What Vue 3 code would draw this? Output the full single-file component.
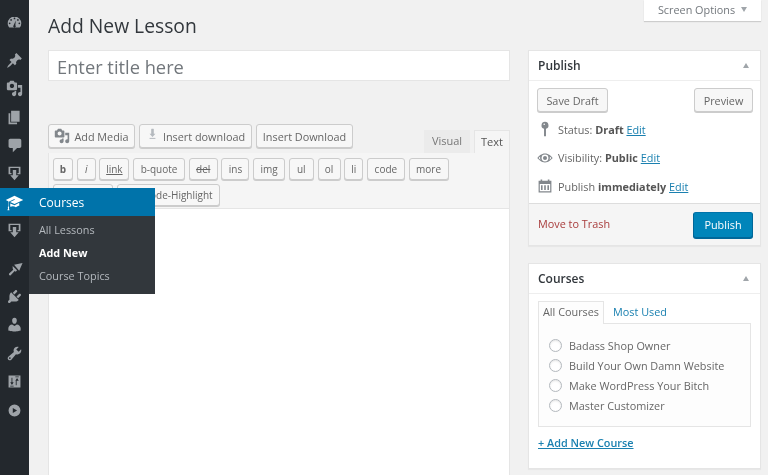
<script setup>
const tags = [
  { label: 'b', w: 20, cls: 'bold' },
  { label: 'i', w: 19, cls: 'ital' },
  { label: 'link', w: 30, cls: 'under' },
  { label: 'b-quote', w: 52 },
  { label: 'del', w: 29, cls: 'strike' },
  { label: 'ins', w: 28 },
  { label: 'img', w: 32 },
  { label: 'ul', w: 25 },
  { label: 'ol', w: 23 },
  { label: 'li', w: 19 },
  { label: 'code', w: 38 },
  { label: 'more', w: 40 }
]
const courses = ['Badass Shop Owner', 'Build Your Own Damn Website', 'Make WordPress Your Bitch', 'Master Customizer']
const mediaPath = 'M13 11V4c0-.55-.45-1-1-1h-1.670L9 1H5L3.670 3H2c-.55 0-1 .45-1 1v7c0 .55.45 1 1 1h10c.55 0 1-.45 1-1zM7 4.500c1.380 0 2.500 1.120 2.500 2.500S8.380 9.500 7 9.500 4.500 8.380 4.500 7 5.620 4.500 7 4.500zM14 6h5v10.500c0 1.380-1.120 2.500-2.500 2.500S14 17.880 14 16.500s1.120-2.500 2.500-2.500c.17 0 .34.020.5.050V9h-3V6zm-4 8.050V13h2v3.500c0 1.380-1.120 2.500-2.500 2.500S7 17.880 7 16.500 8.120 14 9.500 14c.17 0 .34.020.5.050z'
const dlFrame = 'M3 2h14v9h-3.500V9.500H15v-6H5v6h1.500V11H3z'
const dlArrow = 'M8 6h4v6h3l-5 6-5-6h3z'
</script>

<template>
  <div class="page">
    <aside class="side">
      <div class="item first">
        <svg viewBox="0 0 20 20" class="ic"><path fill-rule="evenodd" d="M10 3a8 8 0 0 0-8 8c0 1.900.7 3.600 1.800 5h12.400a8 8 0 0 0 1.800-5 8 8 0 0 0-8-8zM10 4.200a1 1 0 1 1 0 2 1 1 0 0 1 0-2zM6 6a1 1 0 1 1 0 2 1 1 0 0 1 0-2zm8 0a1 1 0 1 1 0 2 1 1 0 0 1 0-2zM4.300 10a1 1 0 1 1 0 2 1 1 0 0 1 0-2zm11.400 0a1 1 0 1 1 0 2 1 1 0 0 1 0-2zM11.500 7.500l-.5 5.700a1.500 1.500 0 1 1-2 0z"/></svg>
      </div>
      <div class="item sep">
        <svg viewBox="0 0 20 20" class="ic"><path d="M10.440 3.020l1.820-1.820 6.360 6.350-1.830 1.820c-1.050-.68-2.480-.57-3.410.36l-.75.75c-.92.93-1.040 2.350-.35 3.400l-1.830 1.820-2.410-2.410-2.800 2.790c-.42.420-3.380 2.710-3.800 2.290s1.860-3.390 2.280-3.810l2.790-2.790L4.100 9.360l1.830-1.820c1.050.69 2.480.57 3.400-.36l.75-.75c.93-.92 1.050-2.350.36-3.410z"/></svg>
      </div>
      <div class="item">
        <svg viewBox="0 0 20 20" class="ic"><path :d="mediaPath"/></svg>
      </div>
      <div class="item">
        <svg viewBox="0 0 20 20" class="ic"><path d="M6 15V2h10v13H6zm-1 1h8v2H3V5h2v11z"/></svg>
      </div>
      <div class="item">
        <svg viewBox="0 0 20 20" class="ic"><path d="M5 2h11c1.100 0 2 .9 2 2v7c0 1.100-.9 2-2 2h-3l-5 5v-5H5c-1.100 0-2-.9-2-2V4c0-1.100.9-2 2-2z"/></svg>
      </div>
      <div class="item">
        <svg viewBox="0 0 20 20" class="ic"><path fill-rule="evenodd" :d="dlFrame"/><path :d="dlArrow"/></svg>
      </div>
      <div class="item active">
        <div class="fly">
          <div class="fly-head">
            <span class="fly-icon">
              <svg viewBox="0 0 20 20" class="ic white"><path d="M10 3L0.800 7.300l2.700 1.300v5.500c-.6.300-.6 1.200-.2 2l-.8 2h2.200l-.6-2c.4-.7.400-1.600-.2-2V9.200L10 6.300l.3.700-5 2.400L10 11.600l9.200-4.300z"/><path d="M5.500 11v3.500c2.500-1 4-.8 6 .5 2-1.300 2.800-1.500 3.500-1.500v-3.200L10 13z"/></svg>
            </span>
            <span class="fly-title">Courses</span>
          </div>
          <ul class="sub">
            <li>All Lessons</li>
            <li class="cur">Add New</li>
            <li>Course Topics</li>
          </ul>
        </div>
      </div>
      <div class="item">
        <svg viewBox="0 0 20 20" class="ic"><path fill-rule="evenodd" :d="dlFrame"/><path :d="dlArrow"/></svg>
      </div>
      <div class="item sep">
        <svg viewBox="0 0 20 20" class="ic"><path d="M9.500 5.500L19.500 3.500 15.500 12.500z"/><path d="M7.800 7l5.200 5.200-1.500 1.500-1.300-.7-4.700 4.800c-1 1-2.800-.6-1.800-1.800l4.800-4.500-.6-1.400z"/></svg>
      </div>
      <div class="item">
        <svg viewBox="0 0 20 20" class="ic"><path d="M13.110 4.360L9.870 7.600 8 5.730l3.240-3.240c.35-.34 1.050-.2 1.560.32.52.51.66 1.210.31 1.550zm-8 1.770l.91-1.120 9.010 9.010-1.190.84c-.71.71-2.630 1.160-3.820 1.160H6.140L4.900 17.260c-.59.59-1.540.59-2.120 0-.59-.58-.59-1.530 0-2.120l1.240-1.240v-3.880c0-1.130.4-3.190 1.090-3.890zm7.260 3.970l3.240-3.240c.34-.35 1.040-.21 1.550.31.52.51.66 1.210.31 1.550l-3.240 3.250z"/></svg>
      </div>
      <div class="item">
        <svg viewBox="0 0 20 20" class="ic"><path d="M10 9.250c-2.270 0-2.730-3.440-2.730-3.440C7 4.020 7.820 2 9.970 2c2.160 0 2.980 2.020 2.710 3.810 0 0-.41 3.440-2.680 3.440zm0 2.570L12.720 10c2.390 0 4.520 2.330 4.520 4.530v2.490s-3.650 1.130-7.240 1.130c-3.650 0-7.240-1.130-7.240-1.130v-2.490c0-2.250 1.940-4.530 4.430-4.530z"/></svg>
      </div>
      <div class="item">
        <svg viewBox="0 0 20 20" class="ic"><path d="M16.680 9.770c-1.340 1.340-3.300 1.670-4.950.99l-5.410 6.520c-.99.99-2.590.99-3.580 0s-.99-2.590 0-3.570l6.520-5.420c-.68-1.650-.35-3.610.99-4.950 1.280-1.280 3.120-1.620 4.720-1.060l-2.890 2.890 2.820 2.820 2.860-2.870c.53 1.580.18 3.400-1.080 4.650zM3.810 16.210c.4.390 1.040.39 1.430 0 .4-.4.4-1.040 0-1.430-.39-.4-1.030-.4-1.430 0-.39.39-.39 1.030 0 1.430z"/></svg>
      </div>
      <div class="item">
        <svg viewBox="0 0 20 20" class="ic"><path fill-rule="evenodd" d="M3 3h14v14H3zM6.500 5.500V11H5l2 3 2-3H7.500V5.500zm6 9V9H15l-2-3-2 3h.5v5.500zM5 15v1h4v-1zM11 4v1h4V4z"/></svg>
      </div>
      <div class="item">
        <svg viewBox="0 0 20 20" class="ic"><path fill-rule="evenodd" d="M10 3a7 7 0 1 0 0 14 7 7 0 0 0 0-14zM8 7l5 3-5 3z"/></svg>
      </div>
    </aside>

    <main class="main">
      <div class="col-left">
        <h1 class="title">Add New Lesson</h1>
        <div class="title-input">Enter title here</div>

        <div class="edtools">
          <div class="media-btns">
            <button class="btn btn-am">
              <svg viewBox="0 0 20 20" class="btn-ic"><path :d="mediaPath"/></svg>
              Add Media
            </button>
            <button class="btn btn-dl">
              <svg viewBox="0 0 20 20" class="btn-ic faint"><path d="M8 2.500c0-1 4-1 4 0v7h2.500L10 14.500 5.500 9.500H8z"/><path d="M5.500 16h9v1.500h-9z"/></svg>
              Insert download
            </button>
            <button class="btn btn-id">Insert Download</button>
          </div>
          <div class="tabs">
            <span class="tab">Visual</span>
            <span class="tab on">Text</span>
          </div>
        </div>

        <div class="editor">
          <div class="quicktags">
            <span v-for="t in tags" :key="t.label" class="qt" :class="t.cls" :style="{ width: t.w + 'px' }">{{ t.label }}</span>
            <span class="qt qt-blank"></span>
            <span class="qt qt-code">Code-Highlight</span>
          </div>
          <div class="textarea"></div>
        </div>
      </div>

      <div class="col-right">
        <button class="screen-opts">Screen Options <span class="tri-down"></span></button>

        <section class="box publish">
          <header class="box-head"><h2>Publish</h2><span class="tri-up"></span></header>
          <div class="pub-body">
            <div class="pub-btns">
              <button class="btn">Save Draft</button>
              <button class="btn">Preview</button>
            </div>
            <div class="pub-row">
              <svg viewBox="0 0 20 20" class="pub-ic"><path fill-rule="evenodd" d="M10 1a4.500 4.500 0 0 0-1.200 8.800V19h2.400V9.800A4.500 4.500 0 0 0 10 1zM9 3a1 1 0 1 1 0 2 1 1 0 0 1 0-2z"/></svg>
              <span>Status: <b>Draft</b> <a>Edit</a></span>
            </div>
            <div class="pub-row">
              <svg viewBox="0 0 20 20" class="pub-ic"><path fill-rule="evenodd" d="M10 4.500c-4.500 0-8 3.500-9.500 5.500 1.500 2 5 5.500 9.500 5.500s8-3.500 9.500-5.500c-1.500-2-5-5.500-9.500-5.500zm0 1.200a4.300 4.300 0 1 1 0 8.600 4.300 4.300 0 0 1 0-8.600zM4 8c-.8.600-1.500 1.300-2 2 .7.900 1.500 1.700 2.500 2.300A6 6 0 0 1 4 8zm12 0a6 6 0 0 1-.5 4.300c1-.6 1.800-1.400 2.500-2.300-.5-.7-1.200-1.400-2-2z"/><path d="M10 7.500a2.500 2.500 0 1 0 0 5 2.500 2.500 0 0 0 0-5z"/></svg>
              <span>Visibility: <b>Public</b> <a>Edit</a></span>
            </div>
            <div class="pub-row">
              <svg viewBox="0 0 20 20" class="pub-ic"><path fill-rule="evenodd" d="M2 3.500h2.500V2h2v1.500h7V2h2v1.500H18V18H2zM3.500 7.500V16.500h13V7.500zM5 9h2v6H5zm4 0h2v6H9zm4 0h2v6h-2z"/></svg>
              <span>Publish <b>immediately</b> <a>Edit</a></span>
            </div>
          </div>
          <footer class="pub-foot">
            <a class="trash">Move to Trash</a>
            <button class="btn primary">Publish</button>
          </footer>
        </section>

        <section class="box courses">
          <header class="box-head"><h2>Courses</h2><span class="tri-up"></span></header>
          <div class="course-body">
            <div class="course-tabs">
              <span class="ctab on">All Courses</span>
              <a class="ctab">Most Used</a>
            </div>
            <div class="course-panel">
              <label v-for="c in courses" :key="c" class="course"><span class="radio"></span>{{ c }}</label>
            </div>
            <a class="add-new">+ Add New Course</a>
          </div>
        </section>
      </div>
    </main>
  </div>
</template>

<style>
html, body { margin: 0; padding: 0; background: #f1f1f1; }
</style>

<style scoped>
* { box-sizing: border-box; }
.page {
  display: flex;
  width: 768px;
  height: 475px;
  overflow: hidden;
  background: #f1f1f1;
  font-family: "Open Sans", sans-serif;
  font-size: 10.85px;
  color: #666;
  filter: blur(0.35px);
}
.side {
  flex: none;
  width: 29px;
  height: 475px;
  background: #23282d;
  padding-top: 8.800px;
}
.item {
  height: 28.4px;
  display: flex;
  align-items: center;
  justify-content: center;
  padding-right: 1px;
}
.item.sep { margin-top: 9px; }
.ic { width: 17px; height: 17px; fill: #9ea3a8; display: block; }
.ic.white { fill: #fff; width: 19px; height: 19px; }
.item.active { position: relative; z-index: 5; }
.fly {
  position: absolute;
  left: 0;
  top: 0;
  width: 155px;
}
.fly-head {
  display: flex;
  align-items: center;
  height: 28px;
  background: #0073aa;
  color: #fff;
  font-size: 12px;
}
.fly-icon { width: 29px; display: flex; justify-content: center; margin-right: 10px; padding-right: 1px; }
.sub {
  list-style: none;
  margin: 0 0 0 29px;
  padding: 2px 0 0 0;
  height: 78px;
  background: #32373c;
  color: #b4b9be;
  font-size: 10.85px;
}
.sub li { height: 23px; line-height: 23px; padding-left: 10px; }
.sub li.cur { color: #fff; font-weight: 700; }

.main {
  flex: 1;
  display: flex;
  padding-left: 19px;
  min-width: 0;
}
.col-left { width: 462px; flex: none; }
.title {
  margin: 0;
  height: 50px;
  padding-top: 9px;
  font-size: 19.3px;
  line-height: 33px;
  font-weight: 400;
  color: #32373c;
}
.title-input {
  height: 31px;
  background: #fff;
  border: 1px solid #e5e5e5;
  padding: 1px 0 0 8px;
  font-size: 18.3px;
  line-height: 29px;
  color: #72777c;
}
.edtools {
  display: flex;
  justify-content: space-between;
  align-items: flex-end;
  margin-top: 43px;
  height: 29px;
}
.media-btns { display: flex; gap: 4px; align-self: flex-start; }
.btn {
  display: inline-flex;
  align-items: center;
  justify-content: center;
  height: 24px;
  padding: 0;
  background: #f7f7f7;
  border: 1px solid #ccc;
  border-radius: 3px;
  box-shadow: 0 1px 0 #ccc;
  font: inherit;
  color: #666;
}
.btn-ic { width: 16px; height: 16px; fill: #82878c; margin-right: 4px; flex: none; }
.btn-ic.faint { fill: #b4b9be; width: 13px; height: 16px; margin-right: 4px; margin-top: -4px; }
.btn-am { width: 87px; }
.btn-dl { width: 113px; }
.btn-id { width: 97px; }
.tabs { display: flex; gap: 4px; }
.tab {
  height: 23px;
  width: 46px;
  line-height: 22px;
  text-align: center;
  background: #ebebeb;
  color: #777;
  font-size: 11px;
}
.tab.on {
  width: 36px;
  background: #f5f5f5;
  border: 1px solid #e5e5e5;
  border-bottom: 0;
  color: #555;
}
.editor { border-left: 1px solid #e5e5e5; border-right: 1px solid #e5e5e5; }
.quicktags {
  display: flex;
  flex-wrap: wrap;
  gap: 4px 3.7px;
  align-content: flex-start;
  height: 56px;
  padding: 5px 4px;
  background: #f5f5f5;
  border-bottom: 1px solid #e5e5e5;
}
.qt {
  display: inline-flex;
  align-items: center;
  justify-content: center;
  height: 22px;
  background: #f7f7f7;
  border: 1px solid #ccc;
  border-radius: 3px;
  box-shadow: 0 1px 0 #ccc;
  font-size: 10px;
  color: #666;
}
.qt-blank { width: 60px; }
.qt-code { width: 103px; justify-content: flex-end; padding-right: 6px; }
.bold { font-weight: 700; }
.ital { font-style: italic; }
.under { text-decoration: underline; }
.strike { text-decoration: line-through; }
.textarea { height: 270px; background: #fff; }

.col-right { width: 233px; flex: none; margin-left: 18px; position: relative; padding-top: 50px; }
.screen-opts {
  position: absolute;
  top: 0;
  right: 0;
  width: 117px;
  height: 21px;
  background: #fff;
  border: 0;
  border-radius: 0;
  box-shadow: 0 1px 1px rgba(0, 0, 0, 0.15);
  font: inherit;
  color: #72777c;
  display: flex;
  align-items: center;
  justify-content: center;
  gap: 6px;
  padding: 0 0 3px 0;
}
.tri-down { width: 0; height: 0; border: 3.500px solid transparent; border-top: 5px solid #a0a5aa; border-bottom: 0; }
.tri-up { width: 0; height: 0; border: 3.500px solid transparent; border-bottom: 5px solid #a0a5aa; border-top: 0; margin-right: 11px; }
.box { background: #fff; border: 1px solid #e5e5e5; box-shadow: 0 1px 1px rgba(0, 0, 0, 0.04); }
.box-head {
  display: flex;
  align-items: center;
  justify-content: space-between;
  height: 30px;
  padding-left: 9px;
  border-bottom: 1px solid #eee;
}
.box-head h2 { margin: 0; font-size: 12px; font-weight: 600; color: #32373c; }
.publish { height: 196px; display: flex; flex-direction: column; }
.pub-body { flex: 1; padding: 6px 7px 0 8px; }
.pub-btns { display: flex; justify-content: space-between; height: 24px; margin-top: 1px; }
.pub-btns .btn:first-child { width: 71px; }
.pub-btns .btn:last-child { width: 59px; }
.pub-row { display: flex; align-items: center; height: 28.500px; }
.pub-btns + .pub-row { margin-top: 3px; }
.pub-ic { width: 16px; height: 16px; fill: #82878c; margin-right: 5px; flex: none; }
a { color: #1a80b0; text-decoration: underline; }
b { font-weight: 700; color: #555; }
.pub-foot {
  display: flex;
  align-items: center;
  justify-content: space-between;
  height: 42px;
  padding: 0 7px 0 9px;
  background: #f5f5f5;
  border-top: 1px solid #ddd;
}
.trash { color: #a83c3c; text-decoration: none; margin-bottom: 2px; }
.btn.primary {
  width: 60px;
  height: 26px;
  background: #0085ba;
  border-color: #0073aa #006799 #006799;
  box-shadow: 0 1px 0 #006799;
  color: #fff;
}
.courses { margin-top: 17px; height: 206px; }
.course-body { padding: 7px 9px 0 9px; }
.course-tabs { display: flex; height: 23px; position: relative; z-index: 1; }
.ctab { height: 23px; line-height: 21px; padding: 0 4px; text-decoration: none; color: #1a80b0; }
.ctab.on { color: #666; background: #fdfdfd; border: 1px solid #e5e5e5; border-bottom: 0; line-height: 20px; }
.ctab:not(.on) { padding-left: 9px; }
.course-panel {
  height: 104px;
  margin-top: -1px;
  padding: 11px 0 0 10px;
  background: #fdfdfd;
  border: 1px solid #e5e5e5;
}
.course { display: flex; align-items: center; height: 20px; }
.radio {
  width: 13px;
  height: 13px;
  margin-right: 7px;
  border: 1px solid #b4b9be;
  border-radius: 50%;
  background: #fff;
  box-shadow: inset 0 1px 2px rgba(0, 0, 0, 0.1);
}
.add-new { display: block; margin-top: 8px; font-weight: 600; }
</style>
